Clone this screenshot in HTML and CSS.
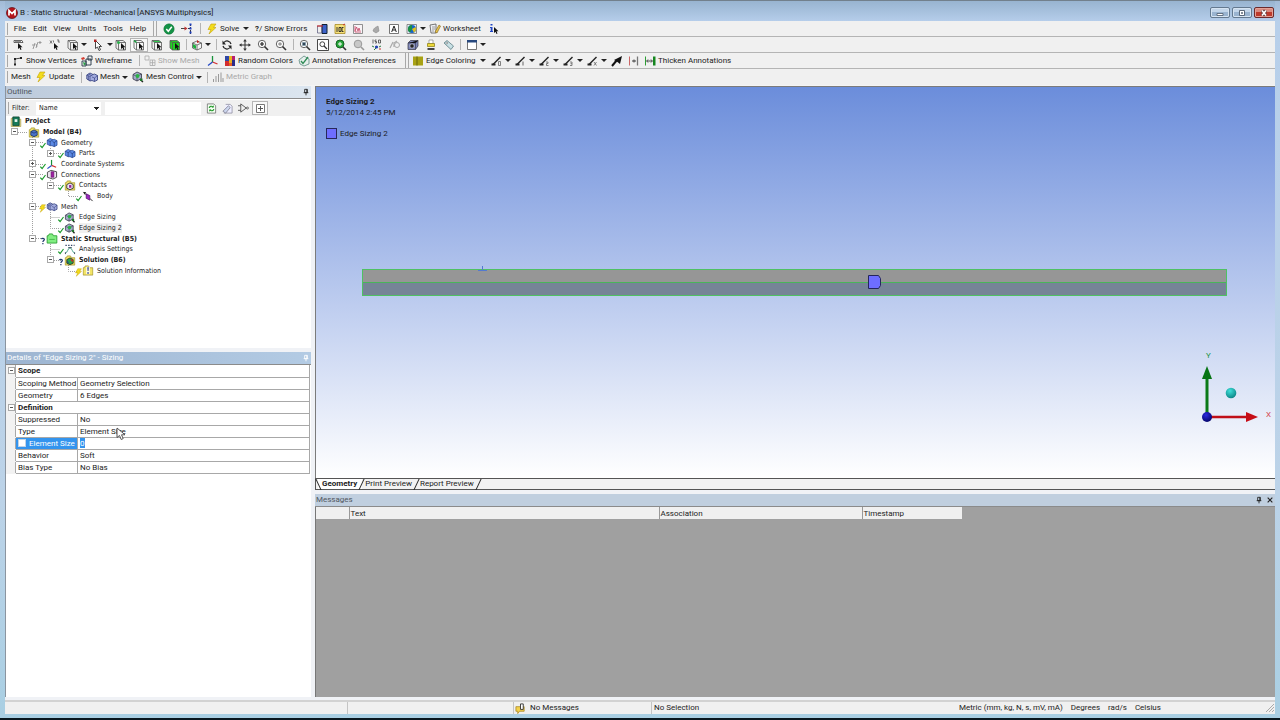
FILE: index.html
```html
<!DOCTYPE html>
<html lang="en">
<head>
<meta charset="utf-8">
<title>B : Static Structural - Mechanical [ANSYS Multiphysics]</title>
<link rel="stylesheet" href="styles.css">
</head>
<body>
<svg class="defs" aria-hidden="true">
  <defs>
    <radialGradient id="cyang" cx=".4" cy=".3" r=".8"><stop offset="0" stop-color="#3fe0da"/><stop offset="1" stop-color="#067a7c"/></radialGradient>
    <radialGradient id="blueg" cx=".4" cy=".3" r=".8"><stop offset="0" stop-color="#2a2ae0"/><stop offset="1" stop-color="#00005c"/></radialGradient>
    <symbol id="bolt" viewBox="0 0 12 12"><path d="M5 1h5L7.500 4.500H10L3 11l2-4.500H2z" fill="#f3dc1c" stroke="#c4a208" stroke-width=".6"/></symbol>
    <symbol id="pointer" viewBox="0 0 12 12"><path d="M6 4v6l1.500-1.300 1 2.300 1-.5-1-2.200H10.500z" fill="#111"/></symbol>
    <symbol id="check" viewBox="0 0 12 12"><circle cx="6" cy="6" r="5.200" fill="#149246" stroke="#0b6e30" stroke-width=".5"/><path d="M3.300 6l2 2.300L8.800 3.800" fill="none" stroke="#fff" stroke-width="1.500"/></symbol>
    <symbol id="branch" viewBox="0 0 12 12"><path d="M0 5.500h4" stroke="#444"/><path d="M3.500 3.500l3 2-3 2" fill="#c03030"/><path d="M7 5.500h2M9.500 1v10" stroke="#334" stroke-dasharray="2 1"/><path d="M8.500 .5h2v2h-2zM8.500 4.500h2v2h-2zM8.500 8.500h2v2h-2z" fill="#1d3fc0"/></symbol>
    <symbol id="panes" viewBox="0 0 12 12"><path d="M6 1.500h5v9H6z" fill="#3d62c8" stroke="#123"/><path d="M1.500 3h4v7h-4z" fill="#eee" stroke="#557" stroke-width=".7"/><path d="M1 3h6" stroke="#d02020"/></symbol>
    <symbol id="comment" viewBox="0 0 12 12"><path d="M1 1.500h10v9H1z" fill="#f7e27b" stroke="#a78a25" stroke-width=".8"/><path d="M3 4v5M5 4.500h2v4H5zM9.500 4.500H8v4h1.500" fill="none" stroke="#222" stroke-width=".9"/><path d="M9 2l2-1" stroke="#c33"/></symbol>
    <symbol id="chart" viewBox="0 0 12 12"><path d="M1.500 1.500h9v9h-9z" fill="#f8f4f6" stroke="#777" stroke-width=".8"/><path d="M3 3v6h6M3 8l1.500-4 1.500 4 1-3 1 3" fill="none" stroke="#c54464" stroke-width=".8"/></symbol>
    <symbol id="clip" viewBox="0 0 12 12"><path d="M3 8c1-4 4-4 5-5l1 5-3 2z" fill="#aaa" stroke="#888" stroke-width=".6"/></symbol>
    <symbol id="lettera" viewBox="0 0 12 12"><path d="M1.500 1.500h9v9h-9z" fill="#fff" stroke="#555" stroke-width=".8"/><path d="M3.700 9L6 3l2.300 6M4.600 7h2.800" fill="none" stroke="#222"/></symbol>
    <symbol id="ball" viewBox="0 0 12 12"><path d="M1 1.500h9.500v9H1z" fill="#e8eef2" stroke="#666" stroke-width=".7"/><circle cx="6" cy="6" r="4" fill="#1664c8"/><path d="M6 2a4 4 0 0 0-2 7.500L6 6z" fill="#1a9040"/><path d="M6 6l3.500-2A4 4 0 0 1 8 9.500z" fill="#e0c020"/></symbol>
    <symbol id="sheet" viewBox="0 0 12 12"><path d="M1 2l6-1v9H2z" fill="#eef0f5" stroke="#555" stroke-width=".8"/><path d="M3 4h3M3 6h3M3 8h2" stroke="#777" stroke-width=".7"/><path d="M6 9l4-7 1.500 1L8 10z" fill="#eac64a" stroke="#7a5c14" stroke-width=".6"/></symbol>
    <symbol id="info" viewBox="0 0 12 12"><path d="M2.500 1h2v1.500h-2zM2 4h2.500v4H5v1H2V8h.7V5H2z" fill="#1f46c4"/><use href="#pointer" width="12" height="12"/></symbol>
    <symbol id="tagsel" viewBox="0 0 12 12"><path d="M1 1.500h8l1 2H1z" fill="#fff" stroke="#444" stroke-width=".8"/><path d="M2 2.500h6" stroke="#444" stroke-width=".6"/><use href="#pointer" x="-1" width="12" height="12"/></symbol>
    <symbol id="fxsel" viewBox="0 0 12 12"><path d="M2 10l2-6M1 6h3M5 5l1 3M7 3l-2 6M9 2v3M7.500 3.500h3" stroke="#999" fill="none"/></symbol>
    <symbol id="xyzsel" viewBox="0 0 12 12"><path d="M1 1.500l2 3m0-3l-2 3M4.500 1.500v2M8 1h2l-1 2h2" stroke="#666" fill="none" stroke-width=".9"/><use href="#pointer" x="-1" width="12" height="12"/></symbol>
    <symbol id="cube" viewBox="0 0 12 12"><path d="M1 1.500h7l2.500 2V11H3.500L1 9zM1 1.500l2.500 2h7M3.500 3.500V11" fill="none" stroke="#555" stroke-width=".8"/></symbol>
    <symbol id="cubesel" viewBox="0 0 12 12"><use href="#cube" width="12" height="12"/><use href="#pointer" width="12" height="12"/></symbol>
    <symbol id="arrowsel" viewBox="0 0 12 12"><path d="M2.500 1.500v8l2-1.500L6 11.500l1.500-.8L6 7.500h2.500z" fill="#fff" stroke="#333" stroke-width=".9"/><path d="M1 .5h2.500v2.500H1z" fill="#b02020"/></symbol>
    <symbol id="vertexsel" viewBox="0 0 12 12"><use href="#cube" width="12" height="12"/><circle cx="3.500" cy="3.500" r="1.500" fill="#2bb04a"/><use href="#pointer" width="12" height="12"/></symbol>
    <symbol id="edgesel" viewBox="0 0 12 12"><use href="#cube" width="12" height="12"/><path d="M1 1.500l2.500 2" stroke="#1ba040" stroke-width="1.600"/><use href="#pointer" width="12" height="12"/></symbol>
    <symbol id="facesel" viewBox="0 0 12 12"><path d="M1 1.500h7l2.500 2h-7z" fill="#32c852"/><use href="#cube" width="12" height="12"/><use href="#pointer" width="12" height="12"/></symbol>
    <symbol id="bodysel" viewBox="0 0 12 12"><path d="M1 1.500h7l2.500 2V11H3.500L1 9z" fill="#21d321"/><use href="#cube" width="12" height="12"/><use href="#pointer" width="12" height="12"/></symbol>
    <symbol id="extend" viewBox="0 0 12 12"><path d="M1.500 4L6 2l4.500 2v5L6 11 1.500 9z" fill="#f4f4f4" stroke="#555" stroke-width=".8"/><path d="M2 5l3 1.500V10L2 8.500z" fill="#20b040"/><path d="M6 6v5M1.500 4L6 6l4.500-2" fill="none" stroke="#555" stroke-width=".8"/><path d="M6 1l2.500 2L6 4z" fill="#c02020"/></symbol>
    <symbol id="rotate" viewBox="0 0 12 12"><path d="M10 5A4 4 0 0 0 3 3.500M2 7a4 4 0 0 0 7 1.500" fill="none" stroke="#222" stroke-width="1.200"/><path d="M1.500 1.500v4h3.500zM10.500 10.500v-4H7z" fill="#222"/></symbol>
    <symbol id="pan" viewBox="0 0 12 12"><path d="M6 1.500v9M1.500 6h9" stroke="#333"/><path d="M6 0l1.800 2.600H4.200zM6 12l1.800-2.600H4.200zM0 6l2.600-1.800v3.600zM12 6L9.400 4.200v3.600z" fill="#333"/></symbol>
    <symbol id="zoom" viewBox="0 0 12 12"><circle cx="5" cy="5" r="3.700" fill="#fafafa" stroke="#555" stroke-width=".9"/><path d="M7.500 7.500L11 11" stroke="#333" stroke-width="1.600"/></symbol>
    <symbol id="zoomdot" viewBox="0 0 12 12"><use href="#zoom" width="12" height="12"/><path d="M3 5h4M5 3v4" stroke="#222" stroke-width="1.200"/></symbol>
    <symbol id="zoomplus" viewBox="0 0 12 12"><use href="#zoom" width="12" height="12"/><path d="M3 5h4M5 3.200v3.600" stroke="#666" stroke-width=".8"/></symbol>
    <symbol id="zoomfit" viewBox="0 0 12 12"><use href="#zoom" width="12" height="12"/><path d="M3.500 3.500h3v3h-3z" fill="#345" stroke="#79a" stroke-width=".6"/></symbol>
    <symbol id="zoombox" viewBox="0 0 12 12"><path d="M.5.500h11v11H.5z" fill="#fff" stroke="#333" stroke-width=".9"/><circle cx="5.300" cy="5.200" r="2.400" fill="none" stroke="#444"/><path d="M7 7l3 3" stroke="#333" stroke-width="1.300"/></symbol>
    <symbol id="zoomgreen" viewBox="0 0 12 12"><circle cx="5" cy="5" r="4" fill="#27a63a" stroke="#156322"/><path d="M3 5h4M5 3v4" stroke="#fff"/><path d="M8 8l3 3" stroke="#333" stroke-width="1.600"/></symbol>
    <symbol id="zoomgray" viewBox="0 0 12 12"><circle cx="5" cy="5" r="3.800" fill="#c8c8c8" stroke="#999"/><path d="M8 8l3 3" stroke="#999" stroke-width="1.600"/></symbol>
    <symbol id="iso" viewBox="0 0 12 12"><path d="M2 .5v4M5.500 1H4v1.500h1.500V4H4M7.500 1h2v3h-2z" fill="none" stroke="#444" stroke-width=".8"/><circle cx="5.500" cy="8" r="1.600" fill="#2040b0"/><path d="M1 7l2 1M10 7L8 8M3 11l2-2" stroke="#287a40"/><path d="M8 10h2" stroke="#c33"/></symbol>
    <symbol id="look" viewBox="0 0 12 12"><path d="M1 9l3-6M5 8V4l3-2" stroke="#aaa" fill="none" stroke-width="1.200"/><circle cx="8" cy="6" r="2.500" fill="none" stroke="#aaa"/></symbol>
    <symbol id="camera" viewBox="0 0 12 12"><path d="M1 4l2.500-2.500H11V7L8.500 10.500H1z" fill="#7d86b8" stroke="#334" stroke-width=".7"/><path d="M1 4h7.500l2.500-2.500M8.500 4v6.500" stroke="#334" stroke-width=".6"/><circle cx="5" cy="7" r="2.200" fill="#222" stroke="#ccd" stroke-width=".7"/></symbol>
    <symbol id="printer" viewBox="0 0 12 12"><path d="M4 1h4v4H4z" fill="#fff" stroke="#777" stroke-width=".6"/><path d="M2.500 4.500h7v3h-7z" fill="#ecd93a" stroke="#86780c" stroke-width=".7"/><path d="M2.500 9h7v2h-7z" fill="#444"/></symbol>
    <symbol id="label" viewBox="0 0 12 12"><path d="M1 4l3-2.500 6.500 5.500L8 10.500z" fill="#c8e0e4" stroke="#5d7f86" stroke-width=".8"/><circle cx="3.800" cy="4" r=".9" fill="#fff" stroke="#555" stroke-width=".5"/></symbol>
    <symbol id="window" viewBox="0 0 12 12"><path d="M1.500 1.500h9v9h-9z" fill="#fff" stroke="#555" stroke-width=".8"/><path d="M1 1h10v2.500H1z" fill="#27487e"/></symbol>
    <symbol id="vertices" viewBox="0 0 12 12"><path d="M3 9.500V4l6-1" fill="none" stroke="#333" stroke-width=".9"/><path d="M2 3h2v2H2zM8 2h2v2H8zM2 8.500h2v2H2z" fill="#222"/></symbol>
    <symbol id="wire" viewBox="0 0 12 12"><path d="M0 3l3-1 1 2-3 1z" fill="#d33c30"/><path d="M1 6h4v5H1zM5 4h5v6H5zM7 1h4v4H7z" fill="none" stroke="#234" stroke-width=".9"/><path d="M2 7l3 1-2 3" fill="#2b9f49"/></symbol>
    <symbol id="meshbox" viewBox="0 0 12 12"><path d="M1 1h4v4H1zM6 5h5v5.500H6zM8.500 5v5.500M6 7.700h5" fill="none" stroke="#aaa" stroke-width=".8"/></symbol>
    <symbol id="axes" viewBox="0 0 12 12"><path d="M5.500 1v6" stroke="#16923a" stroke-width="1.300"/><path d="M5.500 7l5 2" stroke="#d22f2f" stroke-width="1.300"/><path d="M5.500 7L1 10.500" stroke="#264bc6" stroke-width="1.300"/></symbol>
    <symbol id="colors" viewBox="0 0 12 12"><path d="M1 1h4v5H1z" fill="#2f46a4"/><path d="M5 1h3v7H5z" fill="#e9b320"/><path d="M8 1h3v4H8z" fill="#b61f72"/><path d="M1 6h4v5H1z" fill="#d32c2c"/><path d="M8 5h3v6H8z" fill="#2b2c88"/><path d="M5 8h3v3H5z" fill="#e65f25"/></symbol>
    <symbol id="annot" viewBox="0 0 12 12"><path d="M1 5l5-4 5 3v5l-5 2-4-2z" fill="#e6efec" stroke="#5c8a80" stroke-width=".8"/><path d="M3 6l2 2.500L10 2" fill="none" stroke="#2d8a54" stroke-width="1.300"/></symbol>
    <symbol id="edgecolor" viewBox="0 0 12 12"><path d="M1 1.500h10v9H1z" fill="#a8a214"/><path d="M5 1.500v9" stroke="#6b6708"/></symbol>
    <symbol id="edge" viewBox="0 0 12 12"><path d="M2 9.500L9.500 2" stroke="#222" stroke-width="1.500"/><path d="M.5 8.500h4v2h-4z" fill="#222"/></symbol>
    <symbol id="edge0" viewBox="0 0 12 12"><use href="#edge" width="12" height="12"/><path d="M7.500 6.500h2v4h-2z" fill="none" stroke="#666" stroke-width=".8"/></symbol>
    <symbol id="edge1" viewBox="0 0 12 12"><use href="#edge" width="12" height="12"/><path d="M8 6.500v4" stroke="#666"/></symbol>
    <symbol id="edge2" viewBox="0 0 12 12"><use href="#edge" width="12" height="12"/><path d="M7 7h2v1.500H7.500v2H9.500" fill="none" stroke="#666" stroke-width=".8"/></symbol>
    <symbol id="edge3" viewBox="0 0 12 12"><use href="#edge" width="12" height="12"/><path d="M7 7h2v3.500H7M7.500 8.700H9" fill="none" stroke="#666" stroke-width=".8"/></symbol>
    <symbol id="edgex" viewBox="0 0 12 12"><use href="#edge" width="12" height="12"/><path d="M7 7l2.500 3.500M9.500 7L7 10.500" stroke="#666" stroke-width=".8"/></symbol>
    <symbol id="bigarrow" viewBox="0 0 12 12"><path d="M1 11l5-6" stroke="#111" stroke-width="2"/><path d="M11 1L9 9 6.500 7 3 5z" fill="#111"/></symbol>
    <symbol id="gap" viewBox="0 0 12 12"><path d="M1.500 1.500v9" stroke="#c66"/><path d="M9.500 1.500v9" stroke="#777" stroke-width="1.300"/><path d="M4 6h4M6 4.500v3" stroke="#444"/></symbol>
    <symbol id="thick" viewBox="0 0 12 12"><path d="M1.500 1.500v9" stroke="#2c9e34"/><path d="M9 1.500h2.500v9H9z" fill="#15861e"/><path d="M3 6h5M4 4.500L2.500 6 4 7.500M7 4.500L8.500 6 7 7.500" stroke="#222" fill="none" stroke-width=".8"/></symbol>
    <symbol id="mesh" viewBox="0 0 12 12"><path d="M.8 4L4 2l3 1.500L8.500 3l3 1.500V9L8.500 10.500 6 9.500 4 10 .8 8z" fill="#a3acdf" stroke="#2c3878" stroke-width=".8"/><path d="M.8 4L4 5.500 7 3.500M4 5.500V10M6 6l2.500 1 3-2.500M8.500 7v3.500M2.400 3l3 1.500M2.400 4.800V9" fill="none" stroke="#2c3878" stroke-width=".6"/></symbol>
    <symbol id="meshctl" viewBox="0 0 12 12"><path d="M1 3.500L5 1l4.500 2v4.500L5 10 1 8z" fill="#a2adc8" stroke="#334" stroke-width=".8"/><path d="M1 3.500l4 2 4.500-2.500M5 5.500V10" fill="none" stroke="#334" stroke-width=".6"/><circle cx="5.500" cy="5" r="1.900" fill="#29b344"/><path d="M8 7.500h2.500V10H8z" fill="#1f7a2c"/><path d="M9.500 10l1.500 1" stroke="#222" stroke-width="1.500"/></symbol>
    <symbol id="bars" viewBox="0 0 12 12"><path d="M1.500 11V8M4 11V5M6.500 11V3M9 11V1.500M11 11V7" stroke="#999"/></symbol>
    <symbol id="geom" viewBox="0 0 12 12"><path d="M.8 3.500L4 1.500l3 1.500 1.500-.5 3 1.500v5L8.500 10.500 6 9.500 4 9.500.8 8z" fill="#5c8ae6" stroke="#1b3a86" stroke-width=".7"/><path d="M.8 3.500L4 5l3-2M4 5v4.500M6.500 5l2 1 3-2M8.500 6v4.500" fill="none" stroke="#16285e" stroke-width=".6"/></symbol>
    <symbol id="project" viewBox="0 0 12 12"><path d="M.8 2.500H4l1 1h6.200v8H.8z" fill="#f4eba4" stroke="#9b8e34" stroke-width=".7"/><path d="M2.500 1h7v9.500h-7z" fill="#167a58" stroke="#053a28" stroke-width=".8"/><path d="M4.500 3.500h3v3h-3z" fill="#e6f4ee"/></symbol>
    <symbol id="folder" viewBox="0 0 12 12"><path d="M.7 3H2l1-2h3.500l1 2h3.800v8H.7z" fill="#f3e467" stroke="#a1922c" stroke-width=".8"/></symbol>
    <symbol id="model" viewBox="0 0 12 12"><use href="#folder" width="12" height="12"/><path d="M2.500 5L6 3.200 9.500 5v4L6 10.500 2.500 9z" fill="#4a72c8" stroke="#112654" stroke-width=".8"/><path d="M2.500 5L6 6.700 9.500 5" fill="none" stroke="#112654" stroke-width=".6"/></symbol>
    <symbol id="contacts" viewBox="0 0 12 12"><use href="#folder" width="12" height="12"/><path d="M2.500 5L6 3.200 9.500 5v4L6 10.500 2.500 9z" fill="#efe6f2" stroke="#222" stroke-width=".9"/><path d="M5 5.500h2.500v3H5z" fill="#9a1f9e"/></symbol>
    <symbol id="solution" viewBox="0 0 12 12"><use href="#folder" width="12" height="12"/><path d="M2.500 5L6 3.200 9.500 5v4L6 10.500 2.500 9z" fill="#2ba34c" stroke="#222" stroke-width=".8"/><path d="M6 5h3v3z" fill="#d22"/><path d="M3 6l2 3-2-1z" fill="#22a"/></symbol>
    <symbol id="conn" viewBox="0 0 12 12"><path d="M1 3.500L5 1.500 11 3v6L7 11 1 9z" fill="#ece5f0" stroke="#333" stroke-width=".9"/><path d="M5 3h3v6H5z" fill="#a020a4" stroke="#5a0b60" stroke-width=".6"/></symbol>
    <symbol id="body" viewBox="0 0 12 12"><path d="M1 1l4 4M8 8l3 3" stroke="#222"/><path d="M4 3l4 2v5L4 8z" fill="#9a28c0" stroke="#4a0c62" stroke-width=".7"/><path d="M1 1h3L2 4z" fill="#222"/></symbol>
    <symbol id="static" viewBox="0 0 12 12"><path d="M.7 3H2l1-2h3.500l1 2h3.800v8H.7z" fill="#82ee82" stroke="#229a2c" stroke-width=".9"/><path d="M3 7h6" stroke="#48b84e"/></symbol>
    <symbol id="settings" viewBox="0 0 12 12"><path d="M1 1.500h10" stroke="#346" stroke-dasharray="1.500 1.500" stroke-width="1.300"/><path d="M1 10c2 0 3-6 5-6s3 6 5 6" fill="none" stroke="#3f9c86"/><path d="M1 9v2M11 9v2M4 4h4" stroke="#345"/></symbol>
    <symbol id="solinfo" viewBox="0 0 12 12"><use href="#folder" width="12" height="12"/><path d="M4 2h4v8H4z" fill="#fffde0"/><path d="M5.300 2.500h1.500l-.3 4h-.9zM5.300 8h1.500v1.500H5.300z" fill="#1c2b8c"/></symbol>
    <symbol id="tick" viewBox="0 0 12 12"><path d="M3 7.500L5.500 10 10 4" fill="none" stroke="#1c9a2c" stroke-width="1.600"/></symbol>
    <symbol id="quest" viewBox="0 0 12 12"><path d="M4.500 4.200C5 2.600 8.500 2.600 8.500 4.500 8.500 6 6.500 6 6.500 8M6.500 9.200v1.800" fill="none" stroke="#223a6e" stroke-width="1.600"/></symbol>
    <symbol id="pin" viewBox="0 0 12 12"><path d="M4 2h4v5H4zM2.500 7h7M6 7v4M7.200 2v5" fill="none" stroke="currentColor" stroke-width="1.300"/></symbol>
    <symbol id="refresh" viewBox="0 0 12 12"><path d="M1.500 1h7l2 2v8h-9z" fill="#f4fff2" stroke="#666" stroke-width=".8"/><path d="M3.500 5.500c0-2 3-2.500 4-1M8.500 6.500c0 2-3 2.500-4 1" fill="none" stroke="#269a2e" stroke-width="1.200"/><path d="M8.500 2.500V5H6zM3.500 9.500V7H6z" fill="#269a2e"/></symbol>
    <symbol id="erase" viewBox="0 0 12 12"><path d="M4 1.500h5l2 2V11H2" fill="#eef" stroke="#889" stroke-width=".8"/><path d="M1 9l6-6 2 2-5 6z" fill="#ccd6ee" stroke="#778" stroke-width=".8"/></symbol>
    <symbol id="funnel" viewBox="0 0 12 12"><path d="M0 3h3M0 8h3M3 1v9l6-4.500z" fill="none" stroke="#444" stroke-width=".9"/><circle cx="10.300" cy="5.500" r="1.100" fill="none" stroke="#444" stroke-width=".8"/></symbol>
    <symbol id="plusbox" viewBox="0 0 11 11"><path d="M1.500 1.500h8v8h-8z" fill="#fff" stroke="#777"/><path d="M3 5.500h5M5.500 3v5" stroke="#555"/></symbol>
    <symbol id="bubble" viewBox="0 0 12 12"><path d="M1 4h9v5H5l-2 2.500V9H1z" fill="#f3d14c" stroke="#a58118" stroke-width=".8"/><path d="M6 1h3v6H6z" fill="#fff" stroke="#333"/></symbol>
  </defs>
</svg>
<div class="window">
  <header class="titlebar">
    <svg class="logo" viewBox="0 0 12 12"><circle cx="6" cy="6" r="5.500" fill="#b5141c" stroke="#5f0a0e" stroke-width=".7"/><path d="M3 8.500v-5l3 3 3-3v5" fill="none" stroke="#fff" stroke-width="1.700"/></svg>
    <h1 class="title">B : Static Structural - Mechanical [ANSYS Multiphysics]</h1>
    <div class="winbtns">
      <button class="winbtn" aria-label="Minimize"><svg viewBox="0 0 12 8"><path d="M3 4.500h6v2H3z" fill="#fff" stroke="#4c5a6c" stroke-width=".8"/></svg></button>
      <button class="winbtn" aria-label="Maximize"><svg viewBox="0 0 12 8"><path d="M3.500 1.500h5v5h-5zM5.500 3.500h1v1h-1z" fill="#fff" stroke="#4c5a6c" stroke-width=".9"/></svg></button>
      <button class="winbtn close" aria-label="Close"><svg viewBox="0 0 12 8"><path d="M4 1.500l4 5M8 1.500l-4 5" stroke="#54393b" stroke-width="3"/><path d="M4 1.500l4 5M8 1.500l-4 5" stroke="#fff" stroke-width="1.700"/></svg></button>
    </div>
  </header>

  <div class="toolbars">
    <div class="bar bar-menu">
      <i class="grip"></i>
      <button class="menu">File</button><button class="menu">Edit</button><button class="menu">View</button><button class="menu">Units</button><button class="menu">Tools</button><button class="menu">Help</button>
      <i class="grip double"></i>
      <button class="tool" aria-label="Check"><svg><use href="#check"/></svg></button>
      <button class="tool" aria-label="Branch"><svg><use href="#branch"/></svg></button>
      <i class="sep"></i>
      <button class="text"><svg><use href="#bolt"/></svg>Solve</button>
      <button class="drop" aria-label="Solve options"></button>
      <button class="text plain"><b>?</b>/ Show Errors</button>
      <button class="tool" aria-label="Panes"><svg><use href="#panes"/></svg></button>
      <button class="tool" aria-label="Comment"><svg><use href="#comment"/></svg></button>
      <button class="tool" aria-label="Chart"><svg><use href="#chart"/></svg></button>
      <button class="tool" aria-label="Attach"><svg><use href="#clip"/></svg></button>
      <button class="tool" aria-label="Annotation"><svg><use href="#lettera"/></svg></button>
      <button class="tool more" aria-label="Image"><svg><use href="#ball"/></svg></button>
      <button class="text"><svg><use href="#sheet"/></svg>Worksheet</button>
      <button class="tool" aria-label="Information"><svg><use href="#info"/></svg></button>
    </div>
    <div class="bar bar-select">
      <i class="grip"></i>
      <button class="tool" aria-label="Tag"><svg><use href="#tagsel"/></svg></button>
      <button class="tool" aria-label="Function"><svg><use href="#fxsel"/></svg></button>
      <button class="tool" aria-label="Coordinates"><svg><use href="#xyzsel"/></svg></button>
      <button class="tool more" aria-label="Selection type"><svg><use href="#cubesel"/></svg></button>
      <button class="tool more" aria-label="Select mode"><svg><use href="#arrowsel"/></svg></button>
      <button class="tool" aria-label="Vertex"><svg><use href="#vertexsel"/></svg></button>
      <button class="tool pressed" aria-label="Edge"><svg><use href="#edgesel"/></svg></button>
      <button class="tool" aria-label="Face"><svg><use href="#facesel"/></svg></button>
      <button class="tool" aria-label="Body"><svg><use href="#bodysel"/></svg></button>
      <i class="sep"></i>
      <button class="tool more" aria-label="Extend"><svg><use href="#extend"/></svg></button>
      <i class="sep"></i>
      <button class="tool" aria-label="Rotate"><svg><use href="#rotate"/></svg></button>
      <button class="tool" aria-label="Pan"><svg><use href="#pan"/></svg></button>
      <button class="tool" aria-label="Zoom"><svg><use href="#zoomdot"/></svg></button>
      <button class="tool" aria-label="Box zoom"><svg><use href="#zoomplus"/></svg></button>
      <i class="sep"></i>
      <button class="tool" aria-label="Fit"><svg><use href="#zoomfit"/></svg></button>
      <button class="tool" aria-label="Magnifier"><svg><use href="#zoombox"/></svg></button>
      <button class="tool" aria-label="Previous view"><svg><use href="#zoomgreen"/></svg></button>
      <button class="tool" aria-label="Next view"><svg><use href="#zoomgray"/></svg></button>
      <button class="tool" aria-label="Isometric"><svg><use href="#iso"/></svg></button>
      <button class="tool" aria-label="Look at"><svg><use href="#look"/></svg></button>
      <button class="tool" aria-label="Views"><svg><use href="#camera"/></svg></button>
      <button class="tool" aria-label="Rescale"><svg><use href="#printer"/></svg></button>
      <button class="tool" aria-label="Tags"><svg><use href="#label"/></svg></button>
      <i class="sep"></i>
      <button class="tool more" aria-label="Viewports"><svg><use href="#window"/></svg></button>
    </div>
    <div class="bar bar-show">
      <i class="grip"></i>
      <button class="text"><svg><use href="#vertices"/></svg>Show Vertices</button>
      <button class="text"><svg><use href="#wire"/></svg>Wireframe</button>
      <i class="sep"></i>
      <button class="text off" disabled><svg><use href="#meshbox"/></svg>Show Mesh</button>
      <button class="tool" aria-label="Axes"><svg><use href="#axes"/></svg></button>
      <button class="text"><svg><use href="#colors"/></svg>Random Colors</button>
      <button class="text"><svg><use href="#annot"/></svg>Annotation Preferences</button>
      <i class="grip double"></i>
      <button class="text down"><svg><use href="#edgecolor"/></svg>Edge Coloring</button>
      <button class="tool more" aria-label="Free edges"><svg><use href="#edge0"/></svg></button>
      <button class="tool more" aria-label="Single edges"><svg><use href="#edge1"/></svg></button>
      <button class="tool more" aria-label="Double edges"><svg><use href="#edge2"/></svg></button>
      <button class="tool more" aria-label="Triple edges"><svg><use href="#edge3"/></svg></button>
      <button class="tool more" aria-label="Multiple edges"><svg><use href="#edgex"/></svg></button>
      <button class="tool" aria-label="Direction"><svg><use href="#bigarrow"/></svg></button>
      <button class="tool" aria-label="Gap"><svg><use href="#gap"/></svg></button>
      <button class="text"><svg><use href="#thick"/></svg>Thicken Annotations</button>
    </div>
    <div class="bar bar-mesh">
      <i class="grip"></i>
      <span class="caption">Mesh</span>
      <button class="text"><svg><use href="#bolt"/></svg>Update</button>
      <i class="sep"></i>
      <button class="text down"><svg><use href="#mesh"/></svg>Mesh</button>
      <button class="text down"><svg><use href="#meshctl"/></svg>Mesh Control</button>
      <i class="sep"></i>
      <button class="text off" disabled><svg><use href="#bars"/></svg>Metric Graph</button>
    </div>
  </div>

  <main class="work">
    <aside class="side">
      <section class="outline">
        <h2 class="panelhead">Outline<svg><use href="#pin"/></svg></h2>
        <div class="filter">
          <i class="grip"></i>
          <label for="filter">Filter:</label>
          <select id="filter"><option>Name</option></select>
          <input class="query" type="text" aria-label="Filter text">
          <button class="tool" aria-label="Refresh"><svg><use href="#refresh"/></svg></button>
          <button class="tool" aria-label="Clear"><svg><use href="#erase"/></svg></button>
          <button class="tool" aria-label="Filter"><svg><use href="#funnel"/></svg></button>
          <button class="tool pressed" aria-label="Expand"><svg><use href="#plusbox"/></svg></button>
        </div>
        <div class="treewrap">
          <svg class="lines" viewBox="0 0 120 160" aria-hidden="true"><path d="M12 16.500h10M26.500 21v102M30 26.500h8M30 48.500h8M30 58.500h8M30 90.500h8M30 122.500h8M44.500 32v5M48 37.500h8M44.500 64v5M48 69.500h8M62.500 75v5.500h10M44.500 96v16.500h10M44.500 101.500h10M44.500 128v16M44.500 133.500h10M48 144.500h8M62.500 149v6.500h10"/></svg>
          <ul class="tree" role="tree">
            <li class="d0 b"><svg class="ico"><use href="#project"/></svg><span>Project</span></li>
            <li class="d1 b"><button class="tog" aria-label="Collapse"></button><i class="st"></i><svg class="ico"><use href="#model"/></svg><span>Model (B4)</span></li>
            <li class="d2"><button class="tog" aria-label="Collapse"></button><svg class="st"><use href="#tick"/></svg><svg class="ico"><use href="#geom"/></svg><span>Geometry</span></li>
            <li class="d3"><button class="tog plus" aria-label="Expand"></button><svg class="st"><use href="#tick"/></svg><svg class="ico"><use href="#geom"/></svg><span>Parts</span></li>
            <li class="d2"><button class="tog plus" aria-label="Expand"></button><svg class="st"><use href="#tick"/></svg><svg class="ico"><use href="#axes"/></svg><span>Coordinate Systems</span></li>
            <li class="d2"><button class="tog" aria-label="Collapse"></button><svg class="st"><use href="#tick"/></svg><svg class="ico"><use href="#conn"/></svg><span>Connections</span></li>
            <li class="d3"><button class="tog" aria-label="Collapse"></button><svg class="st"><use href="#tick"/></svg><svg class="ico"><use href="#contacts"/></svg><span>Contacts</span></li>
            <li class="d4"><i class="nt"></i><svg class="st"><use href="#tick"/></svg><svg class="ico"><use href="#body"/></svg><span>Body</span></li>
            <li class="d2"><button class="tog" aria-label="Collapse"></button><svg class="st"><use href="#bolt"/></svg><svg class="ico"><use href="#mesh"/></svg><span>Mesh</span></li>
            <li class="d3"><i class="nt"></i><svg class="st"><use href="#tick"/></svg><svg class="ico"><use href="#meshctl"/></svg><span>Edge Sizing</span></li>
            <li class="d3"><i class="nt"></i><svg class="st"><use href="#tick"/></svg><svg class="ico"><use href="#meshctl"/></svg><span class="cur">Edge Sizing 2</span></li>
            <li class="d2 b"><button class="tog" aria-label="Collapse"></button><svg class="st"><use href="#quest"/></svg><svg class="ico"><use href="#static"/></svg><span>Static Structural (B5)</span></li>
            <li class="d3"><i class="nt"></i><svg class="st"><use href="#tick"/></svg><svg class="ico"><use href="#settings"/></svg><span>Analysis Settings</span></li>
            <li class="d3 b"><button class="tog" aria-label="Collapse"></button><svg class="st"><use href="#quest"/></svg><svg class="ico"><use href="#solution"/></svg><span>Solution (B6)</span></li>
            <li class="d4"><i class="nt"></i><svg class="st"><use href="#bolt"/></svg><svg class="ico"><use href="#solinfo"/></svg><span>Solution Information</span></li>
          </ul>
        </div>
      </section>
      <section class="details">
        <h2 class="panelhead active">Details of "Edge Sizing 2" - Sizing<svg><use href="#pin"/></svg></h2>
        <div class="detailbody">
          <table class="props">
            <colgroup><col class="c-gut"><col class="c-name"><col></colgroup>
            <tr class="group"><td><button class="tog" aria-label="Collapse"></button></td><th colspan="2">Scope</th></tr>
            <tr><td></td><th>Scoping Method</th><td>Geometry Selection</td></tr>
            <tr><td></td><th>Geometry</th><td>6 Edges</td></tr>
            <tr class="group"><td><button class="tog" aria-label="Collapse"></button></td><th colspan="2">Definition</th></tr>
            <tr><td></td><th>Suppressed</th><td>No</td></tr>
            <tr><td></td><th>Type</th><td>Element Size</td></tr>
            <tr class="sel"><td></td><th><label><input type="checkbox">Element Size</label></th><td><input class="value" type="text" value="0" aria-label="Element Size value"></td></tr>
            <tr><td></td><th>Behavior</th><td>Soft</td></tr>
            <tr><td></td><th>Bias Type</th><td>No Bias</td></tr>
          </table>
          <svg class="cursor" viewBox="0 0 10 14"><path d="M1 1v9.500l2.500-2 1.700 4 2-.9-1.700-3.800H9z" fill="#fff" stroke="#444" stroke-width=".9"/></svg>
        </div>
      </section>
    </aside>

    <div class="content">
      <section class="view">
        <div class="legend">
          <strong>Edge Sizing 2</strong>
          <span>5/12/2014 2:45 PM</span>
          <span class="key"><i></i>Edge Sizing 2</span>
        </div>
        <div class="beam"></div>
        <svg class="cross" viewBox="0 0 9 6"><path d="M0 4.500h9M4.500 0v5" stroke="#5479d0"/></svg>
        <svg class="flag" viewBox="0 0 16 14"><path d="M1.500 .5h10l2 3v7l-2 3h-10z" fill="#6e6eff" stroke="#25255c"/></svg>
        <svg class="triad" viewBox="0 0 80 80">
          <path d="M12 67V26" stroke="#0a7a18" stroke-width="3"/><path d="M12 16l5 13H7z" fill="#067414"/>
          <path d="M12 67h42" stroke="#c00f18" stroke-width="2.500"/><path d="M63 67l-12-5v10z" fill="#c60d16"/>
          <circle cx="12" cy="67" r="5" fill="url(#blueg)"/><circle cx="36" cy="43" r="5.300" fill="url(#cyang)"/>
          <text x="11" y="8" fill="#299447">Y</text><text x="71" y="67" fill="#d43f4f">X</text>
        </svg>
      </section>
      <nav class="tabs">
        <button class="tab on">Geometry</button><button class="tab">Print Preview</button><button class="tab">Report Preview</button>
      </nav>
      <section class="messages">
        <h2 class="panelhead">Messages<svg><use href="#pin"/></svg><button class="x" aria-label="Close messages"><svg viewBox="0 0 12 12"><path d="M2.500 2.500l7 7M9.500 2.500l-7 7" stroke="#222" stroke-width="1.700"/></svg></button></h2>
        <div class="msgbody">
          <table class="msgs"><colgroup><col class="m0"><col class="m1"><col class="m2"><col class="m3"></colgroup>
            <tr><th></th><th>Text</th><th>Association</th><th>Timestamp</th></tr>
          </table>
        </div>
      </section>
    </div>
  </main>

  <footer class="status">
    <span></span><span></span><span><svg><use href="#bubble"/></svg>No Messages</span><span>No Selection</span>
    <span class="units"><b>Metric (mm, kg, N, s, mV, mA)</b><b>Degrees</b><b>rad/s</b><b>Celsius</b></span>
    <svg class="size" viewBox="0 0 10 10"><path d="M9 1L1 9M9 4L4 9M9 7L7 9" stroke="#aaa"/></svg>
  </footer>
</div>
</body>
</html>
```
FILE: styles.css
```css
* { box-sizing: border-box; }
body { margin: 0; height: 100vh; overflow: hidden; background: #08171f; font: 8px/12px Roboto, "Open Sans", sans-serif; color: #1c1c1c; }
button, input, select { font: inherit; color: inherit; margin: 0; padding: 0; border: 0; background: none; }
h1, h2, ul { margin: 0; padding: 0; font: inherit; }
.defs { position: absolute; width: 0; height: 0; }
.window { height: calc(100vh - 2px); display: flex; flex-direction: column; padding: 0 5px 4px; border-top: 1px solid #72808c; background: linear-gradient(#a2bbd7, #b7cfea 20px, #bcd3e8 500px, #a9cfe3); }

.titlebar { height: 20px; flex: none; display: flex; align-items: center; gap: 2px; padding-top: 3px; background: linear-gradient(#98b4d0, #b5cdea); }
.logo { width: 12px; height: 12px; margin-left: 1px; }
.title { flex: 1; }
.winbtns { display: flex; gap: 2px; padding-right: 1px; }
.winbtn { width: 20px; height: 11px; display: grid; place-items: center; border: 1px solid #64798f; border-radius: 2px; background: linear-gradient(#c3d6ea 50%, #9ab4d0 50%); box-shadow: inset 0 0 0 1px #d5e3f1; }
.winbtn svg { width: 12px; height: 8px; }
.close { background: linear-gradient(#d98b80 45%, #bd3a2c 50%); border-color: #6b2b2c; box-shadow: inset 0 0 0 1px #e5a196; }

.toolbars { flex: none; background: #f0f0f0; }
.bar { display: grid; align-items: center; justify-content: start; height: 16px; border-bottom: 1px solid #b4b4b4; }
.bar:last-child { border-bottom: 0; }
.bar-menu { grid-template-columns: 5px 20px 20px 24px 26px 26px 24px 10px 18px 18px 8px 36px 12px 61px repeat(5, 18px) 24px 58px 18px; }
.bar-select { grid-template-columns: 5px repeat(3, 18px) 26px 22px repeat(4, 18px) 4px 27px 3px repeat(4, 18px) 6px repeat(9, 18px) 5px 26px; }
.bar-show { grid-template-columns: 5px 69px 57px 6px 62px 18px 74px 106px 8px 78px repeat(5, 24px) 17px 17px 98px; }
.bar-mesh { grid-template-columns: 5px 23px 45px 6px 46px 74px 6px 70px; }
.grip { height: 12px; width: 1px; margin-left: 2px; background: #a8a8a8; }
.double { width: 4px; margin-left: 3px; background: none; border: solid #a8a8a8; border-width: 0 1px; height: 15px; }
.sep { height: 11px; width: 1px; margin: 0 auto; background: #b4b4b4; }
.menu { text-align: center; }
.tool, .text { display: flex; align-items: center; height: 14px; white-space: nowrap; }
.tool svg { width: 12px; height: 12px; margin: 0 3px; flex: none; }
.text svg { width: 12px; height: 12px; margin: 0 2px; flex: none; }
.plain { padding-left: 3px; }
.off { color: #a9a9a9; }
.pressed { background: #f8f8f8; border: 1px solid #b5b5b5; }
.pressed svg { margin: 0 2px; }
.more svg { margin-right: 2px; }
.more::after, .down::after, .drop::after { content: ""; border: solid transparent; border-width: 3px 3px 0; border-top-color: #222; }
.down::after { margin: 0 2px 0 auto; }
.drop { display: grid; place-items: center; height: 14px; }
.caption { padding-left: 1px; }

.work { flex: 1; min-height: 0; display: grid; grid-template-columns: 306px minmax(0, 1fr); gap: 4px; background: #f0f2f6; border-top: 1px solid #f4f4f4; padding-bottom: 3px; }
.side { display: flex; flex-direction: column; gap: 4px; min-height: 0; border-left: 1px solid #8b95a0; }
.outline { flex: none; height: 262px; display: flex; flex-direction: column; background: #fff; }
.panelhead { flex: none; height: 13px; display: flex; align-items: center; padding: 0 1px; color: #50565e; background: linear-gradient(90deg, #bccadb, #dce6f0); border-bottom: 1px solid #8b8b8b; }
.panelhead > svg { width: 8px; height: 8px; margin-left: auto; color: #222; }
.panelhead.active { color: #fff; background: linear-gradient(90deg, #9db5d1, #b3cbe4); }
.panelhead.active > svg { color: #fff; }
.filter { display: flex; align-items: center; height: 16px; margin-top: 1px; background: #f0f0f0; font: 7px/12px "DejaVu Sans Condensed", "DejaVu Sans", sans-serif; }
.filter label { width: 27px; padding-left: 3px; }
.filter select { appearance: none; width: 65px; height: 13px; padding-left: 3px; background: conic-gradient(from -45deg at 50% 100%, #222 90deg, #fff 0) no-repeat 57px 5px / 6px 3px #fff; }
.query { width: 96px; height: 13px; margin: 0 3px 0 4px; background: #fff; }
.filter .tool { width: 16px; }
.filter .tool svg { width: 11px; height: 11px; margin: 0 2px; }
.treewrap { position: relative; flex: 1; }
.lines { position: absolute; left: 0; top: 0; width: 120px; height: 160px; fill: none; stroke: #a0a0a0; stroke-dasharray: 1 1; }
.tree { position: relative; list-style: none; height: 160px; display: grid; grid-auto-rows: 1fr; font: 7px/10px "DejaVu Sans Condensed", "DejaVu Sans", sans-serif; }
.tree li { display: flex; align-items: center; min-height: 0; white-space: nowrap; }
.d0, .d1 { padding-left: 4px; }
.d2 { padding-left: 22px; }
.d3 { padding-left: 40px; }
.d4 { padding-left: 58px; }
.b { font-weight: bold; }
.ico { width: 12px; height: 11px; margin-right: 3px; flex: none; }
.st { width: 11px; height: 9px; margin-right: -2px; flex: none; }
svg.st { margin-top: 3px; }
.tog { width: 7px; height: 7px; margin: 0 1px; flex: none; display: block; border: 1px solid #a8a8a8; background: linear-gradient(#555, #555) center / 3px 1px no-repeat #fff; }
.plus { background: linear-gradient(#555, #555) center / 3px 1px no-repeat, linear-gradient(#555, #555) center / 1px 3px no-repeat, #fff; }
.nt { width: 9px; flex: none; }
.cur { background: #f0f0f0; }

.details { flex: 1; min-height: 0; display: flex; flex-direction: column; }
.detailbody { position: relative; flex: 1; background: #fff; }
.props { width: calc(100% - 1px); border-collapse: collapse; table-layout: fixed; }
.c-gut { width: 9px; }
.c-name { width: 62px; }
.props td, .props th { height: 12px; padding: 0 2px; font-weight: normal; line-height: 11px; text-align: left; border: 1px solid #a8a8a8; white-space: nowrap; overflow: hidden; }
.props tr:first-child > * { border-top: 0; }
.props td:first-child { padding: 0; background: #f2f2f2; border-color: #f2f2f2 #a8a8a8 #f2f2f2 #f2f2f2; }
.props .group th { font-weight: bold; }
.props .sel th { background: #3394ee; color: #fff; }
.sel label { display: flex; align-items: center; gap: 3px; }
.sel input[type="checkbox"] { appearance: none; width: 8px; height: 8px; background: #fff; border: 1px solid #c0d4e8; }
.value { display: block; width: 5px; height: 10px; background: #3394ee; color: #fff; }
.cursor { position: absolute; left: 110px; top: 62px; width: 10px; height: 14px; }

.content { display: flex; flex-direction: column; min-width: 0; }
.view { position: relative; flex: none; height: 392px; border: solid #7b7b7b; border-width: 1px 0 0 1px; background: linear-gradient(#6b8ddb, #fff); }
.legend { display: flex; flex-direction: column; padding: 9px 10px; line-height: 11px; }
.key { display: flex; align-items: center; gap: 3px; margin-top: 10px; }
.key i { width: 11px; height: 11px; background: #6e6eff; border: 1px solid #28285a; }
.beam { position: absolute; left: 46px; right: 48px; top: 182px; height: 27px; background: linear-gradient(#969696 12px, #49b45a 12px, #49b45a 13px, #768497 13px); border: 1px solid #4fc163; }
.cross { position: absolute; left: 162px; top: 179px; width: 9px; height: 6px; }
.flag { position: absolute; left: 57%; top: 188px; width: 16px; height: 14px; margin-left: 4px; }
.triad { position: absolute; right: 0; bottom: 48px; width: 80px; height: 80px; overflow: visible; font-size: 8px; }
.tabs { flex: none; display: flex; height: 12px; padding-left: 2px; border: 1px solid #555; border-width: 1px 0 1px 1px; background: #f2f2f2; }
.tab { position: relative; height: 10px; line-height: 10px; padding: 0 5px 0 3px; }
.tab::after { content: ""; position: absolute; right: 0; top: 0; height: 11px; border-right: 1px solid #222; transform: skewX(-25deg); }
.tab:first-child::before { content: ""; position: absolute; left: 0; top: 0; height: 11px; border-left: 1px solid #222; transform: skewX(25deg); }
.on { font-weight: bold; background: #fff; padding-left: 4px; }
.messages { flex: 1; min-height: 0; display: flex; flex-direction: column; padding-top: 4px; }
.messages .panelhead { gap: 3px; background: #c0cfdf; }
.x { width: 8px; height: 8px; }
.x svg { display: block; width: 8px; height: 8px; }
.msgbody { flex: 1; background: #a0a0a0; border-left: 1px solid #777; }
.msgs { border-collapse: collapse; table-layout: fixed; width: 646px; background: #f0f0f0; }
.m0 { width: 33px; }
.m1 { width: 310px; }
.m2 { width: 203px; }
.m3 { width: 100px; }
.msgs th { height: 12px; line-height: 11px; padding: 0 1px; text-align: left; font-weight: normal; border-left: 1px solid #999; }
.msgs th:first-child { border-left: 0; }

.status { flex: none; display: grid; grid-template-columns: 343px 166px 138px 1fr 320px 10px; height: 14px; align-items: center; background: #f0f0f0; border-top: 2px solid #d2d2d2; }
.status > span { display: flex; align-items: center; gap: 4px; height: 12px; padding-left: 2px; border-right: 1px solid #c4c4c4; white-space: nowrap; }
.status > span:nth-child(4) { border: 0; }
.status span svg { width: 11px; height: 11px; margin-left: -1px; }
.status .units { gap: 8px; border: 0; padding-left: 14px; }
.units b { font-weight: normal; }
.size { width: 10px; height: 10px; }
```
